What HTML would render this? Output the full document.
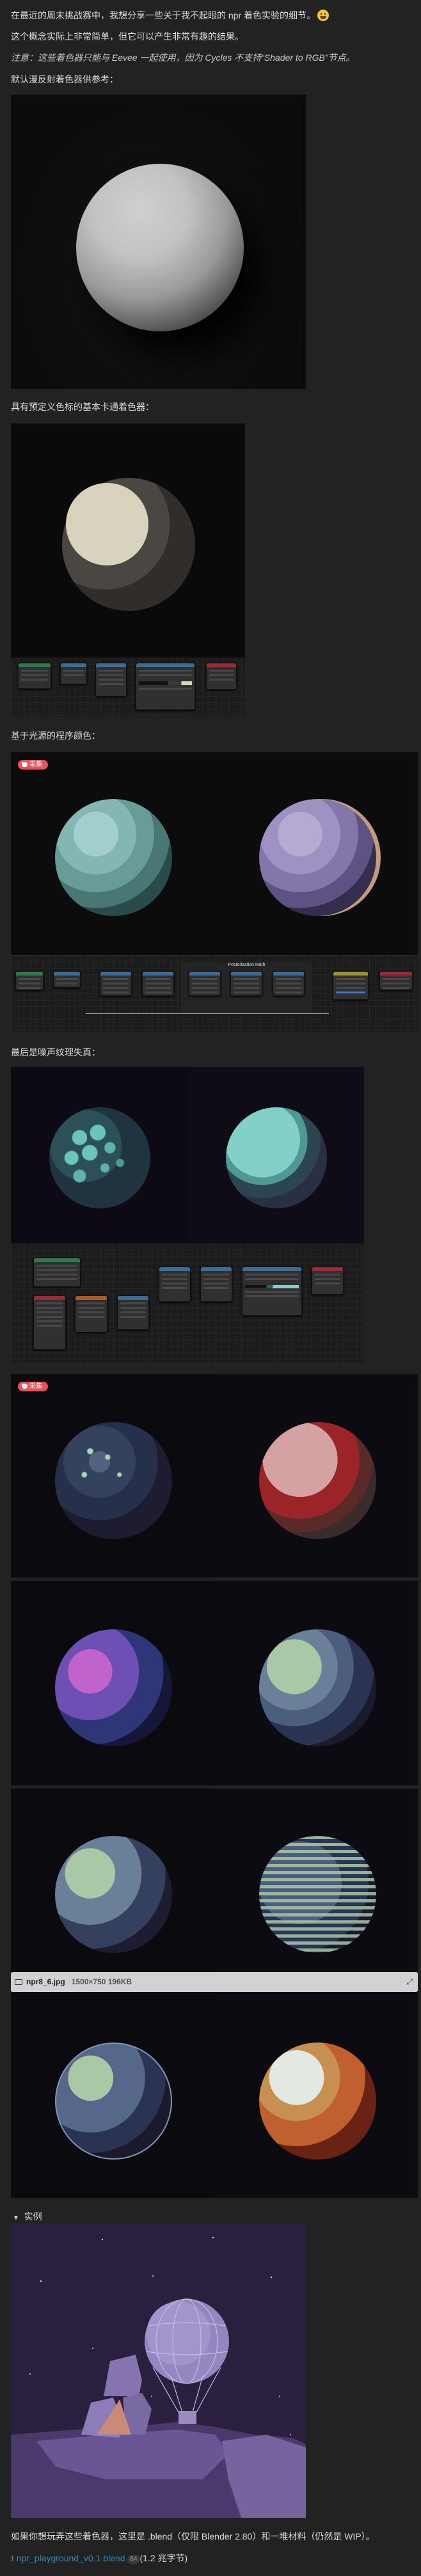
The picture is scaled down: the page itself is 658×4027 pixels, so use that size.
<!DOCTYPE html>
<html><head><meta charset="utf-8">
<style>
*{margin:0;padding:0;box-sizing:border-box}
html,body{width:658px;height:4027px;background:#222;overflow:hidden}
body{position:relative;font-family:"Liberation Sans","Noto Sans CJK SC",sans-serif;color:#dcdcdc;font-size:14px}
.t{position:absolute;left:17px;white-space:nowrap;line-height:20px}
.a{position:absolute}
.img{position:absolute;overflow:hidden;background:#0b0b0b}
.sph{position:absolute;border-radius:50%}
.grid{background-color:#1c1c1c;background-image:linear-gradient(#262626 1px,transparent 1px),linear-gradient(90deg,#262626 1px,transparent 1px);background-size:10px 10px}
.node{position:absolute;background:#303030;border-radius:3px;box-shadow:0 1px 3px #000;border:1px solid #111}
.node .h{height:6px;border-radius:3px 3px 0 0}
.node .r{height:3px;margin:4px 4px 0;background:#474747;border-radius:1px}
.g{background:#2d7a4c}.b{background:#3c6c96}.rd{background:#9a2b36}.y{background:#9c9428}.o{background:#b35a22}
.badge{position:absolute;left:11px;top:12px;width:47px;height:15px;border-radius:8px;background:#e8525c;color:#fff;font-size:10px;line-height:15px;padding-left:18px}
.badge:before{content:"";position:absolute;left:6px;top:3px;width:9px;height:8px;background:#fff;border-radius:2px 5px 5px 5px}
.pan{position:absolute;left:17px;width:636px;overflow:hidden;background:#0a0a0f}
.pan .half{position:absolute;top:0;bottom:0;left:318px;right:0;background:#0c0b11}
</style></head><body>

<div class="t" style="top:14px">在最近的周末挑战赛中，我想分享一些关于我不起眼的 npr 着色实验的细节。<span style="display:inline-block;width:18px;height:18px;border-radius:50%;background:#f4c73a;vertical-align:-4px;margin-left:3px;position:relative"><span style="position:absolute;left:5px;top:5px;width:2px;height:4px;background:#553;border-radius:1px"></span><span style="position:absolute;left:11px;top:5px;width:2px;height:4px;background:#553;border-radius:1px"></span><span style="position:absolute;left:4px;top:10px;width:10px;height:5px;background:#6b3a1e;border-radius:0 0 5px 5px"></span></span></div>
<div class="t" style="top:47px">这个概念实际上非常简单，但它可以产生非常有趣的结果。</div>
<div class="t" style="top:80px;font-style:italic;color:#c8c8c8">注意：这些着色器只能与 Eevee 一起使用，因为 Cycles 不支持“Shader to RGB”节点。</div>
<div class="t" style="top:114px">默认漫反射着色器供参考：</div>

<div class="img" style="left:17px;top:148px;width:461px;height:460px;background:radial-gradient(ellipse at 50% 60%,#161616,#0c0c0c 70%)">
 <div class="sph" style="left:102px;top:108px;width:262px;height:262px;box-shadow:30px 40px 60px #000;background:radial-gradient(circle at 38% 28%,#d0d0d0 0%,#c2c2c2 30%,#9a9a9a 55%,#5a5a5a 75%,#262626 92%,#1a1a1a 100%)"></div>
</div>

<div class="t" style="top:626px">具有预定义色标的基本卡通着色器：</div>

<div class="img" style="left:17px;top:662px;width:366px;height:366px;background:#0a0a0a">
 <div class="sph" style="left:80px;top:85px;width:208px;height:208px;background:radial-gradient(circle at 32% 35%,#4a4641 0 52%,#302d2a 52% 75%,#1c1a18 100%)"></div>
 <div class="sph" style="left:86px;top:93px;width:129px;height:129px;background:#d8d3bd"></div>
</div>
<div class="a grid" style="left:17px;top:1028px;width:366px;height:93px">
 <div class="node" style="left:11px;top:8px;width:52px;height:41px"><div class="h g"></div><div class="r"></div><div class="r"></div><div class="r"></div></div>
 <div class="node" style="left:77px;top:8px;width:42px;height:34px"><div class="h b"></div><div class="r"></div><div class="r"></div></div>
 <div class="node" style="left:132px;top:8px;width:49px;height:53px"><div class="h b"></div><div class="r"></div><div class="r"></div><div class="r"></div><div class="r"></div></div>
 <div class="node" style="left:195px;top:8px;width:93px;height:74px"><div class="h b"></div><div class="r"></div><div class="r"></div><div style="height:6px;margin:8px 4px 0;background:linear-gradient(90deg,#111 0 55%,#3a3a3a 55% 80%,#d8d3bd 80%)"></div><div class="r"></div></div>
 <div class="node" style="left:305px;top:8px;width:48px;height:42px"><div class="h rd"></div><div class="r"></div><div class="r"></div><div class="r"></div></div>
</div>

<div class="t" style="top:1140px">基于光源的程序颜色：</div>

<div class="img" style="left:17px;top:1176px;width:636px;height:317px;background:#0c0c0c">
 <div class="badge">采集</div>
 <div class="sph" style="left:69px;top:73px;width:183px;height:183px;background:radial-gradient(circle at 35% 30%,#a2cfcb 0 20%,#84b6b3 20% 36%,#679c99 36% 52%,#487774 52% 66%,#2a4b4a 66% 80%,#122121 80% 92%,#070c0c 92%)"></div>
 <div class="sph" style="left:395px;top:73px;width:183px;height:183px;background:#c49a80"></div>
 <div class="sph" style="left:388px;top:73px;width:183px;height:183px;background:radial-gradient(circle at 35% 30%,#b7aad2 0 20%,#9f91c2 20% 36%,#8476a8 36% 52%,#5e5283 52% 66%,#352d4d 66% 80%,#18141f 80% 92%,#0a080c 92%)"></div>
</div>
<div class="a grid" style="left:17px;top:1493px;width:636px;height:120px">
 <div class="a" style="left:266px;top:12px;width:205px;height:78px;background:#242424"></div>
 <div class="a" style="left:266px;top:12px;width:205px;text-align:center;font-size:7px;color:#ddd">Posterization Math</div>
 <div class="node" style="left:7px;top:25px;width:44px;height:30px"><div class="h g"></div><div class="r"></div><div class="r"></div><div class="r"></div></div>
 <div class="node" style="left:66px;top:25px;width:43px;height:26px"><div class="h b"></div><div class="r"></div><div class="r"></div></div>
 <div class="node" style="left:139px;top:25px;width:50px;height:39px"><div class="h b"></div><div class="r"></div><div class="r"></div><div class="r"></div><div class="r"></div></div>
 <div class="node" style="left:205px;top:25px;width:50px;height:39px"><div class="h b"></div><div class="r"></div><div class="r"></div><div class="r"></div><div class="r"></div></div>
 <div class="node" style="left:278px;top:25px;width:50px;height:39px"><div class="h b"></div><div class="r"></div><div class="r"></div><div class="r"></div><div class="r"></div></div>
 <div class="node" style="left:343px;top:25px;width:50px;height:39px"><div class="h b"></div><div class="r"></div><div class="r"></div><div class="r"></div><div class="r"></div></div>
 <div class="node" style="left:409px;top:25px;width:50px;height:39px"><div class="h b"></div><div class="r"></div><div class="r"></div><div class="r"></div><div class="r"></div></div>
 <div class="node" style="left:503px;top:25px;width:56px;height:45px"><div class="h y"></div><div class="r"></div><div class="r"></div><div class="r"></div><div class="r" style="background:#4a78c4"></div></div>
 <div class="node" style="left:576px;top:25px;width:52px;height:30px"><div class="h rd"></div><div class="r"></div><div class="r"></div><div class="r"></div></div>
 <div class="a" style="left:117px;top:91px;width:380px;height:1px;background:#999"></div>
</div>

<div class="t" style="top:1635px">最后是噪声纹理失真：</div>

<div class="img" style="left:17px;top:1668px;width:552px;height:276px;background:#0d0a14">
 <div class="a" style="left:277px;top:0;width:275px;height:276px;background:#0f0c16"></div>
 <div class="sph" style="left:60px;top:63px;width:158px;height:158px;background:radial-gradient(circle at 30% 30%,#6cc4bd 0 7%,transparent 8%),radial-gradient(circle at 48% 25%,#6cc4bd 0 8%,transparent 9%),radial-gradient(circle at 22% 50%,#6cc4bd 0 7%,transparent 8%),radial-gradient(circle at 40% 45%,#6cc4bd 0 9%,transparent 10%),radial-gradient(circle at 60% 40%,#5cb2ac 0 6%,transparent 7%),radial-gradient(circle at 30% 68%,#5cb2ac 0 6%,transparent 7%),radial-gradient(circle at 55% 60%,#5cb2ac 0 5%,transparent 6%),radial-gradient(circle at 70% 55%,#4c9a96 0 4%,transparent 5%),radial-gradient(circle at 36% 38%,#2c5058 0 40%,#1f3340 40%)"></div>
 <div class="sph" style="left:336px;top:63px;width:158px;height:158px;background:radial-gradient(circle at 36% 32%,#82d0c8 0 40%,#4f9896 40% 48%,#2d4452 48% 62%,#2a2f44 62% 100%)"></div>
</div>
<div class="a grid" style="left:17px;top:1944px;width:552px;height:186px">
 <div class="node" style="left:35px;top:22px;width:74px;height:46px"><div class="h g"></div><div class="r"></div><div class="r"></div><div class="r"></div><div class="r"></div></div>
 <div class="node" style="left:35px;top:81px;width:51px;height:85px"><div class="h rd"></div><div class="r"></div><div class="r"></div><div class="r"></div><div class="r"></div><div class="r"></div><div class="r"></div></div>
 <div class="node" style="left:100px;top:81px;width:51px;height:58px"><div class="h o"></div><div class="r"></div><div class="r"></div><div class="r"></div><div class="r"></div></div>
 <div class="node" style="left:166px;top:81px;width:50px;height:54px"><div class="h b"></div><div class="r"></div><div class="r"></div><div class="r"></div><div class="r"></div></div>
 <div class="node" style="left:231px;top:36px;width:50px;height:55px"><div class="h b"></div><div class="r"></div><div class="r"></div><div class="r"></div><div class="r"></div></div>
 <div class="node" style="left:296px;top:36px;width:50px;height:55px"><div class="h b"></div><div class="r"></div><div class="r"></div><div class="r"></div><div class="r"></div></div>
 <div class="node" style="left:361px;top:36px;width:94px;height:77px"><div class="h b"></div><div class="r"></div><div class="r"></div><div style="height:5px;margin:8px 4px 0;background:linear-gradient(90deg,#111 0 40%,#2d5a5a 40% 52%,#82d0c8 52%)"></div><div class="r"></div><div class="r"></div></div>
 <div class="node" style="left:470px;top:36px;width:50px;height:44px"><div class="h rd"></div><div class="r"></div><div class="r"></div><div class="r"></div></div>
</div>

<div class="pan" style="top:2148px;height:318px">
 <div class="half"></div><div class="badge">采集</div>
 <div class="sph" style="left:69px;top:75px;width:183px;height:183px;background:radial-gradient(circle at 30% 25%,#a8d8b8 0 2%,transparent 3%),radial-gradient(circle at 45% 30%,#a8d8b8 0 2%,transparent 3%),radial-gradient(circle at 55% 45%,#a8d8b8 0 2%,transparent 3%),radial-gradient(circle at 25% 45%,#a8d8b8 0 2%,transparent 3%),radial-gradient(circle at 38% 34%,#52627e 0 10%,#34425e 10% 34%,#26304a 34% 55%,#1e1c30 55% 100%)"></div>
 <div class="sph" style="left:388px;top:75px;width:183px;height:183px;background:radial-gradient(circle at 35% 32%,#d4a2a2 0 34%,#9a2428 34% 54%,#5a2a28 54% 66%,#3a2c2a 66% 100%)"></div>
</div>
<div class="pan" style="top:2471px;height:320px">
 <div class="half"></div>
 <div class="sph" style="left:69px;top:76px;width:183px;height:183px;background:radial-gradient(circle at 30% 36%,#c064cc 0 20%,#6e50b4 20% 44%,#2e3678 44% 66%,#151638 66% 100%)"></div>
 <div class="sph" style="left:388px;top:76px;width:183px;height:183px;background:radial-gradient(circle at 30% 32%,#a9c8a6 0 24%,#6a7f98 24% 38%,#4c5e7e 38% 52%,#2a3452 52% 70%,#1b1a2c 70% 100%)"></div>
</div>
<div class="pan" style="top:2796px;height:287px">
 <div class="half"></div>
 <div class="sph" style="left:69px;top:74px;width:183px;height:183px;background:radial-gradient(circle at 30% 32%,#a9c8a6 0 22%,#6a7f98 22% 45%,#34405e 45% 66%,#1e1c30 66% 100%)"></div>
 <div class="sph" style="left:388px;top:74px;width:183px;height:183px;background:repeating-linear-gradient(180deg,rgba(168,200,166,.85) 0 5px,transparent 5px 11px),radial-gradient(circle at 35% 40%,#4c5e7e 0 40%,#2a3452 40% 66%,#1b1a2c 66%)"></div>
</div>
<div class="a" style="left:17px;top:3083px;width:636px;height:31px;background:#d2d2d2;border-radius:3px;color:#222;font-size:12px;line-height:31px">
 <span style="display:inline-block;width:12px;height:9px;border:1.5px solid #333;border-radius:1px;margin:0 6px 0 6px;vertical-align:-1px"></span><b>npr8_6.jpg</b>&nbsp;&nbsp;&nbsp;<span style="color:#555;font-weight:bold">1500×750 196KB</span>
 <span style="position:absolute;right:8px;top:0;color:#333;font-size:12px">⤢</span>
</div>
<div class="pan" style="top:3114px;height:322px">
 <div class="half"></div>
 <div class="sph" style="left:69px;top:79px;width:183px;height:183px;border:2px solid #7f96b4;background:radial-gradient(circle at 30% 30%,#a9c8a6 0 20%,#56688a 20% 48%,#2a3452 48% 66%,#1b1a2c 66% 100%)"></div>
 <div class="sph" style="left:388px;top:79px;width:183px;height:183px;background:radial-gradient(circle at 32% 30%,#e2e8e2 0 24%,#c89050 24% 38%,#c0602e 38% 60%,#6a2214 60% 80%,#3a120c 80%)"></div>
</div>

<div class="t" style="top:3455px;left:20px"><span style="font-size:10px">▼</span>&nbsp;&nbsp;实例</div>

<div class="img" style="left:17px;top:3476px;width:461px;height:460px;background:#2a1f3c">
<svg width="461" height="460" viewBox="0 0 461 460">
 <g fill="#ddd"><circle cx="143" cy="25" r="1.2"/><circle cx="316" cy="22" r="1.2"/><circle cx="47" cy="90" r="1.2"/><circle cx="222" cy="82" r="1"/><circle cx="407" cy="84" r="1.2"/><circle cx="240" cy="134" r="1.2"/><circle cx="128" cy="195" r="1"/><circle cx="30" cy="235" r="1"/><circle cx="420" cy="270" r="1"/><circle cx="437" cy="330" r="1"/><circle cx="220" cy="270" r="1"/></g>
 <path d="M0 330 L100 322 L190 318 L260 310 L320 318 L380 330 L440 335 L461 345 L461 460 L0 460 Z" fill="#4a3a6c"/>
 <path d="M40 340 L150 330 L260 322 L320 330 L340 360 L300 400 L150 400 L70 380 Z" fill="#6a5694"/>
 <path d="M330 340 L400 330 L461 350 L461 460 L360 460 L340 400 Z" fill="#77649f"/>
 <path d="M110 330 L125 280 L160 272 L175 310 L170 335 Z" fill="#8c7cb8"/>
 <path d="M145 270 L155 215 L195 205 L205 245 L200 270 Z" fill="#8574ae"/>
 <path d="M175 272 L205 265 L220 290 L210 330 L180 330 Z" fill="#7a6aa2"/>
 <path d="M135 330 L170 275 L188 330 Z" fill="#c98a78"/>
 <circle cx="275" cy="184" r="66" fill="#9686c0"/>
 <circle cx="262" cy="172" r="50" fill="#a494cc"/>
 <g stroke="#c6baea" stroke-width="1.2" fill="none"><ellipse cx="275" cy="184" rx="22" ry="66"/><ellipse cx="275" cy="184" rx="48" ry="66"/><path d="M215 160 Q275 150 335 160"/><path d="M212 200 Q275 210 338 200"/><path d="M222 225 L262 295 M250 238 L268 295 M300 238 L284 295 M328 225 L290 295"/></g>
 <rect x="262" y="293" width="28" height="20" fill="#9a8cc2"/>
</svg>
</div>

<div class="t" style="top:3955px">如果你想玩弄这些着色器，这里是 .blend（仅限 Blender 2.80）和一堆材料（仍然是 WIP）。</div>
<div class="t" style="top:3989px"><span style="color:#2a8ac2">⭳ npr_playground_v0.1.blend</span> <span style="display:inline-block;background:#3a3a3a;color:#999;font-size:10px;line-height:14px;padding:0 4px;border-radius:7px;vertical-align:1px">84</span>(1.2 兆字节)</div>
</body></html>
